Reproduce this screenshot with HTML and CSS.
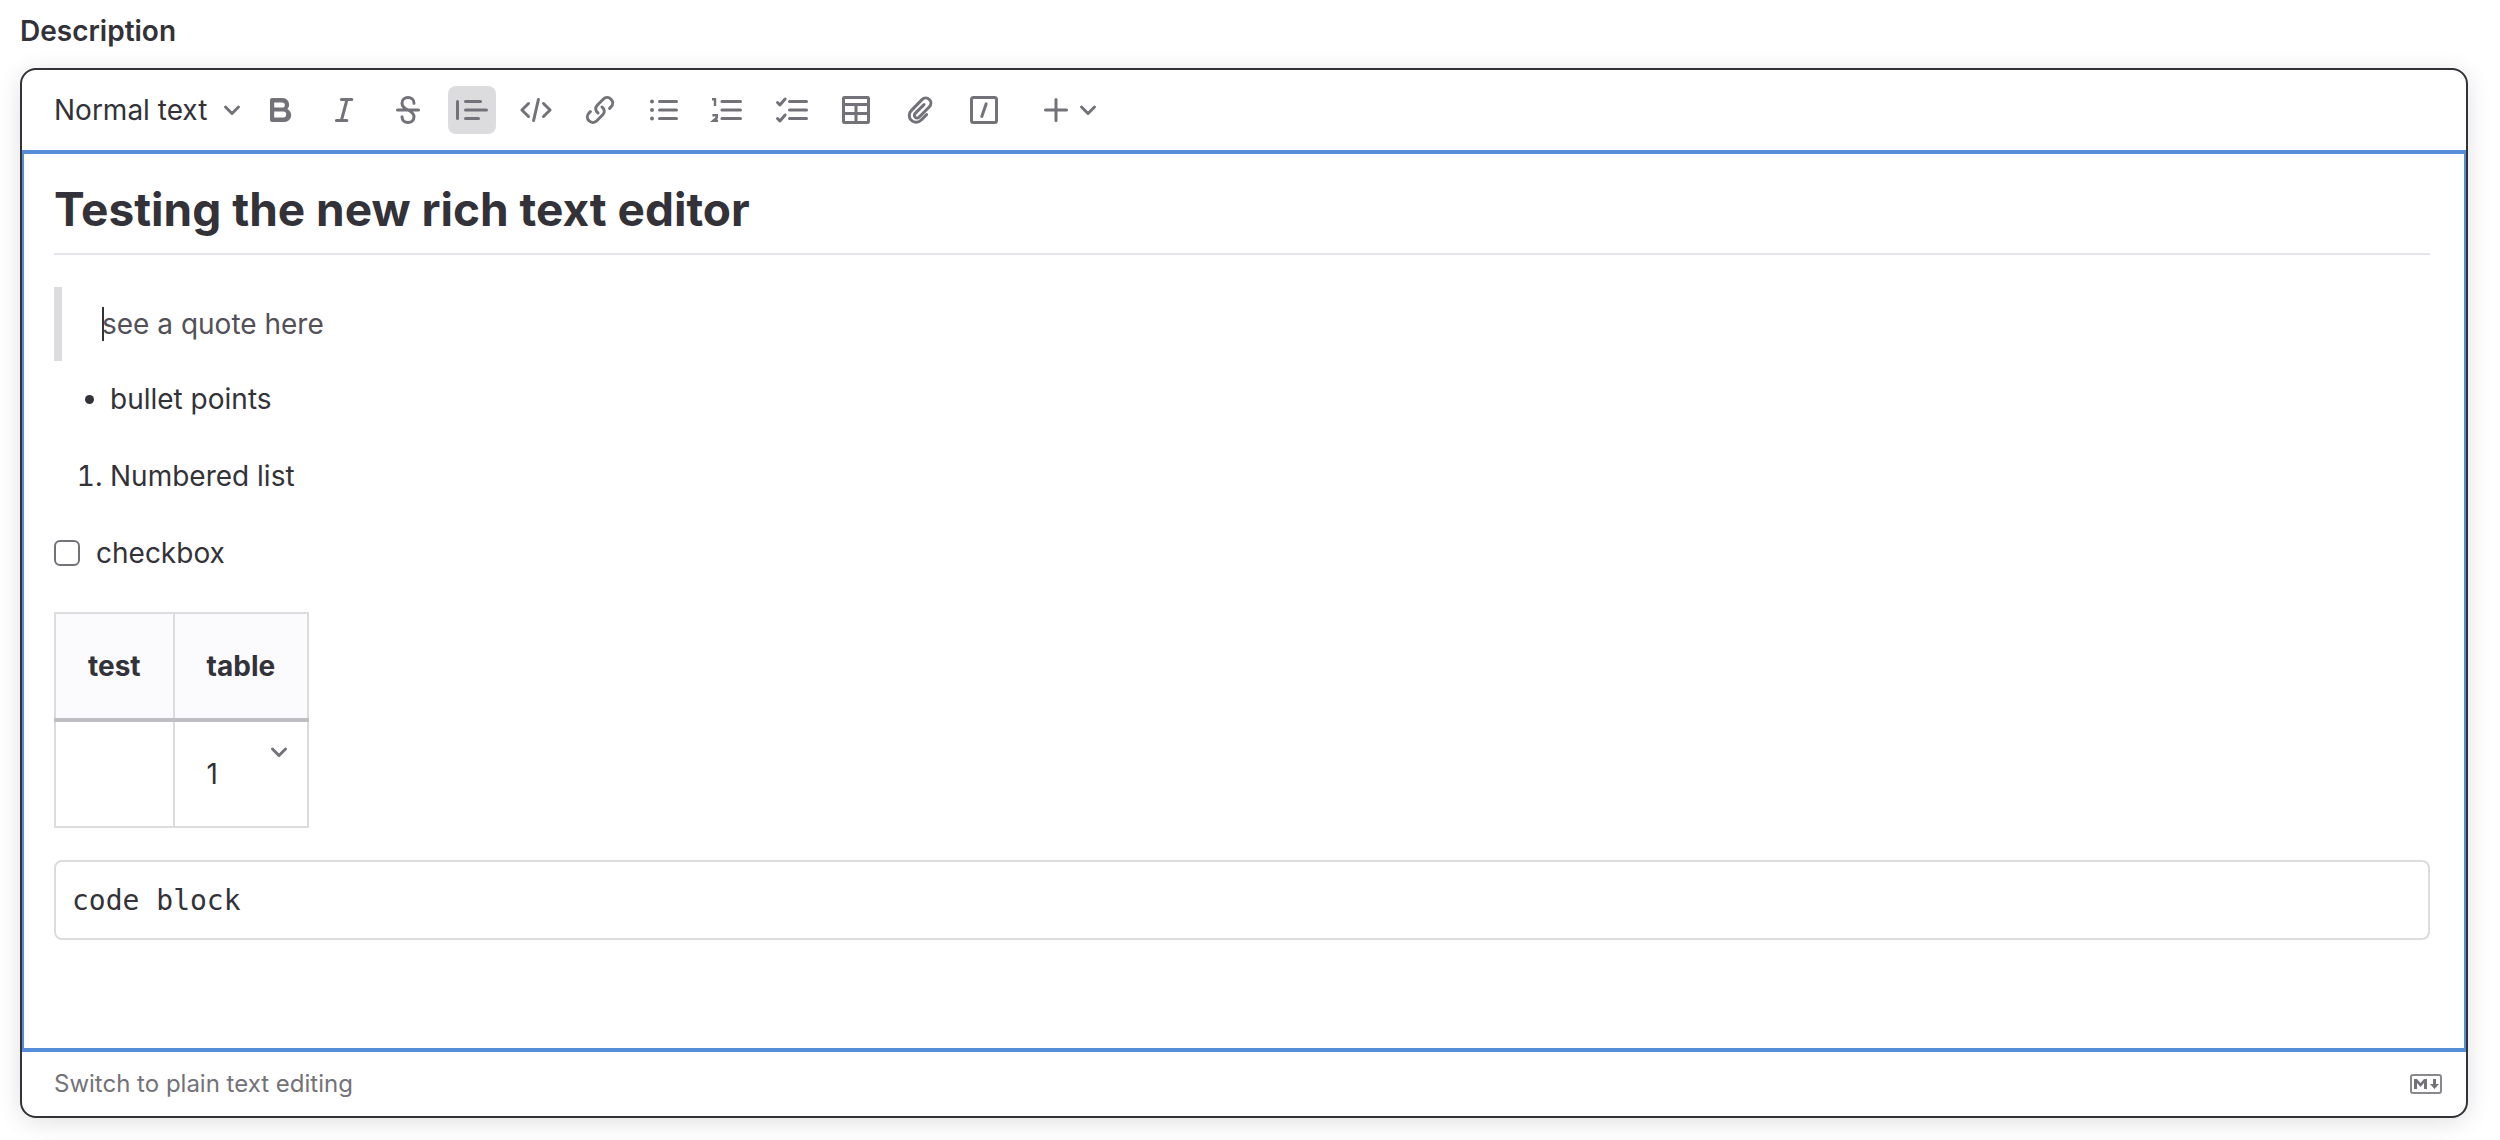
FILE: index.html
```html
<!DOCTYPE html>
<html lang="en">
<head>
<meta charset="utf-8">
<meta name="viewport" content="width=device-width, initial-scale=1">
<title>Description</title>
<link rel="stylesheet" href="styles.css">
</head>
<body>
<main class="field">
  <h2 class="field-label" id="description-label">Description</h2>
  <section class="editor">
    <div class="toolbar" role="toolbar" aria-label="Formatting">
      <div class="style-picker">
        <select class="style-select" aria-label="Text style">
          <option>Normal text</option>
          <option>Heading 1</option>
          <option>Heading 2</option>
        </select>
        <svg class="chevron" viewBox="0 0 12 8"><path d="M2.750 2.500L6 5.750 9.250 2.500"/></svg>
      </div>
      <div class="tools">
        <button class="tool" type="button" aria-label="Bold"><svg class="icon icon-solid" viewBox="0 0 16 16"><path fill-rule="evenodd" d="M4 2h5.200a3.300 3.300 0 0 1 2.500 5.500A3.450 3.450 0 0 1 9.700 14H4a1 1 0 0 1-1-1V3a1 1 0 0 1 1-1zM5.100 4.200v2.600h4a1.300 1.300 0 0 0 0-2.600zM5.100 8.800v3h4.500a1.500 1.500 0 0 0 0-3z"/></svg></button>
        <button class="tool" type="button" aria-label="Italic"><svg class="icon" viewBox="0 0 16 16"><path d="M6.700 2.750h5.200M4.200 13.250h5.200M9.500 2.750l-2.800 10.500"/></svg></button>
        <button class="tool" type="button" aria-label="Strikethrough"><svg class="icon" viewBox="0 0 16 16"><path d="M2.750 8h10.500M11 4.600C11 3 9.800 1.750 8 1.750S5 3 5 4.600C5 6.500 6.600 7.300 8 8s3 1.500 3 3.400c0 1.600-1.200 2.850-3 2.850s-3-1.200-3-2.850"/></svg></button>
        <button class="tool tool-active" type="button" aria-label="Quote" aria-pressed="true"><svg class="icon" viewBox="0 0 16 16"><path d="M.750 3.750v8.500M4.750 3.750h7.500M4.750 8h10.500M4.750 12.250h6.500"/></svg></button>
        <button class="tool" type="button" aria-label="Code"><svg class="icon" viewBox="0 0 16 16"><path d="M4.250 4.750L.950 8l3.300 3.250M11.750 4.750L15.050 8l-3.300 3.250M9.200 2.750l-2.400 10.500"/></svg></button>
        <button class="tool" type="button" aria-label="Link"><svg class="icon" viewBox="0 0 16 16"><path d="M7 9.500C5.600 8.400 5.500 6.700 6.600 5.600l3-3a2.750 2.750 0 0 1 3.900 3.900l-.700.700M9 6.500c1.400 1.100 1.500 2.800.400 3.900l-3 3a2.750 2.750 0 0 1-3.900-3.900l.700-.700"/></svg></button>
        <button class="tool" type="button" aria-label="Bullet list"><svg class="icon" viewBox="0 0 16 16"><path d="M5.750 3.750h8.500M5.750 8h8.500M5.750 12.250h8.500"/><path class="dots" d="M2 3.750h0M2 8h0M2 12.250h0"/></svg></button>
        <button class="tool" type="button" aria-label="Numbered list"><svg class="icon" viewBox="0 0 16 16"><path d="M4.950 3.750h9.300M4.950 8h9.300M4.950 12.250h9.300"/><path class="marks" d="M0 2.600h1.500V6M.200 10.600h2.200v1.200L.600 13.400h2.400"/></svg></button>
        <button class="tool" type="button" aria-label="Task list"><svg class="icon" viewBox="0 0 16 16"><path d="M6.750 3.750h8.500M6.750 8h8.500M6.750 12.250h8.500M.750 4.250l1.200 1.250 2.600-3M.750 12.250l1.200 1.250 2.600-3"/></svg></button>
        <button class="tool" type="button" aria-label="Table"><svg class="icon" viewBox="0 0 16 16"><rect x="1.750" y="1.750" width="12.500" height="12.500" rx=".4"/><path d="M1.750 5.250h12.500M1.750 9.750h12.500M8 5.250v9"/></svg></button>
        <button class="tool" type="button" aria-label="Attach a file"><svg class="icon" viewBox="0 0 16 16"><path d="M11.300 10.300l-2.800 2.800a3.400 3.400 0 0 1-4.900-4.800l5.400-5.500a2.550 2.550 0 0 1 3.700 3.600L7.500 11.600a1.300 1.300 0 0 1-1.900-1.900L10 5.300"/></svg></button>
        <button class="tool" type="button" aria-label="Quick action"><svg class="icon" viewBox="0 0 16 16"><rect x="1.750" y="1.750" width="12.500" height="12.500" rx="1"/><path d="M9.100 4.900l-2.200 6.300"/></svg></button>
        <button class="more" type="button" aria-label="More options">
          <svg class="icon" viewBox="0 0 16 16"><path d="M8 2.750v10.500M2.750 8h10.500"/></svg>
          <svg class="chevron" viewBox="0 0 12 8"><path d="M2.750 2.500L6 5.750 9.250 2.500"/></svg>
        </button>
      </div>
    </div>
    <div class="content" role="textbox" aria-multiline="true" aria-labelledby="description-label">
      <h1 class="title">Testing the new rich text editor</h1>
      <blockquote class="quote"><span class="caret"></span>see a quote here</blockquote>
      <ul class="list"><li>bullet points</li></ul>
      <ol class="list"><li>Numbered list</li></ol>
      <label class="task"><input class="task-box" type="checkbox">checkbox</label>
      <table class="grid">
        <thead><tr><th>test</th><th>table</th></tr></thead>
        <tbody><tr><td></td><td>1<button class="cell-menu" type="button" aria-label="Edit table"><svg class="chevron" viewBox="0 0 12 8"><path d="M2.750 2.500L6 5.750 9.250 2.500"/></svg></button></td></tr></tbody>
      </table>
      <pre class="code"><code>code block</code></pre>
    </div>
    <footer class="footer">
      <button class="switch" type="button">Switch to plain text editing</button>
      <a class="markdown" href="#markdown" aria-label="Markdown is supported"><svg class="markdown-icon" viewBox="0 0 32 20"><rect x="1" y="1" width="30" height="18" rx="2"/><path class="markdown-mark" d="M4 15V5h3l3.500 4L14 5h3v10h-3V9l-3.500 4L7 9v6zM23 5h3v5h3l-4.500 5L20 10h3z"/></svg></a>
    </footer>
  </section>
</main>
</body>
</html>
```
FILE: styles.css
```css
* {
  box-sizing: border-box;
}

body {
  margin: 0;
  background: #fff;
  color: #333238;
  font-family: Inter, "Liberation Sans", sans-serif;
  font-size: 28px;
  line-height: 40px;
}

button,
select {
  margin: 0;
  padding: 0;
  border: 0;
  background: none;
  color: inherit;
  font: inherit;
}

.field {
  padding: 11px 32px 22px 20px;
}

.field-label {
  margin: 0 0 17px;
  font-size: 28px;
  font-weight: 600;
}

.editor {
  border: 2px solid #333238;
  border-radius: 16px;
  box-shadow: 0 4px 24px rgba(0, 0, 0, 0.12);
}

.toolbar {
  display: flex;
  align-items: center;
  gap: 12px;
  height: 80px;
  padding: 0 32px;
}

.style-picker {
  display: grid;
  grid-template-columns: 190px;
  align-items: center;
}

.style-picker > * {
  grid-area: 1 / 1;
}

.style-select {
  appearance: none;
  height: 48px;
}

.style-picker .chevron {
  justify-self: end;
  pointer-events: none;
}

.chevron,
.icon {
  display: block;
  flex: none;
  overflow: visible;
  fill: none;
  stroke: #737278;
  stroke-linecap: round;
  stroke-linejoin: round;
}

.icon {
  width: 32px;
  height: 32px;
  stroke-width: 1.5;
}

.chevron {
  width: 24px;
  height: 16px;
  stroke-width: 1.5;
}

.icon-solid {
  fill: #737278;
  stroke: none;
}

.dots {
  stroke-width: 2;
}

.marks {
  stroke-width: 1.2;
  stroke-linecap: butt;
  stroke-linejoin: miter;
}

.tools {
  display: flex;
  align-items: center;
  gap: 16px;
}

.tool {
  display: grid;
  place-items: center;
  width: 48px;
  height: 48px;
  border-radius: 8px;
}

.tool-active {
  background: #dcdcde;
}

.more {
  display: flex;
  align-items: center;
  gap: 4px;
  height: 48px;
  padding: 0 16px;
}

.content {
  min-height: 902px;
  padding: 26px 34px 0 30px;
  border: solid #568dd8;
  border-width: 4px 2px;
}

.title {
  margin: 0 0 32px;
  padding-bottom: 15px;
  border-bottom: 2px solid #e4e4ea;
  font-size: 46px;
  font-weight: 700;
  line-height: 58px;
}

.quote {
  margin: 0 0 18px;
  padding: 17px 40px;
  border-left: 8px solid #dcdcde;
  color: #535158;
}

.caret {
  display: inline-block;
  width: 2px;
  height: 34px;
  margin-right: -2px;
  background: #333238;
  vertical-align: -7px;
}

.list {
  margin: 0 0 37px;
  padding-left: 56px;
}

.task {
  display: flex;
  align-items: center;
  gap: 16px;
  width: fit-content;
  margin-bottom: 39px;
}

.task-box {
  appearance: none;
  width: 26px;
  height: 26px;
  margin: 0;
  border: 2px solid #737278;
  border-radius: 6px;
}

.grid {
  margin-bottom: 32px;
  border-collapse: collapse;
}

.grid th,
.grid td {
  position: relative;
  height: 107px;
  padding: 32px;
  border: 2px solid #dcdcde;
  text-align: left;
}

.grid th {
  border-bottom: 4px solid #bfbfc3;
  background: #fbfafd;
  font-weight: 700;
}

.cell-menu {
  position: absolute;
  top: 22px;
  right: 16px;
}

.code {
  margin: 0;
  padding: 19px 16px 17px;
  border: 2px solid #dcdcde;
  border-radius: 8px;
}

.code code {
  font-family: "DejaVu Sans Mono", "Liberation Mono", monospace;
  font-size: 28px;
}

.footer {
  display: flex;
  align-items: center;
  justify-content: space-between;
  height: 64px;
  padding: 0 24px 0 32px;
}

.switch {
  color: #737278;
  font-size: 24px;
}

.markdown-icon {
  display: block;
  width: 32px;
  height: 20px;
  fill: none;
  stroke: #89888d;
  stroke-width: 2;
}

.markdown-mark {
  fill: #737278;
  stroke: none;
}
```
